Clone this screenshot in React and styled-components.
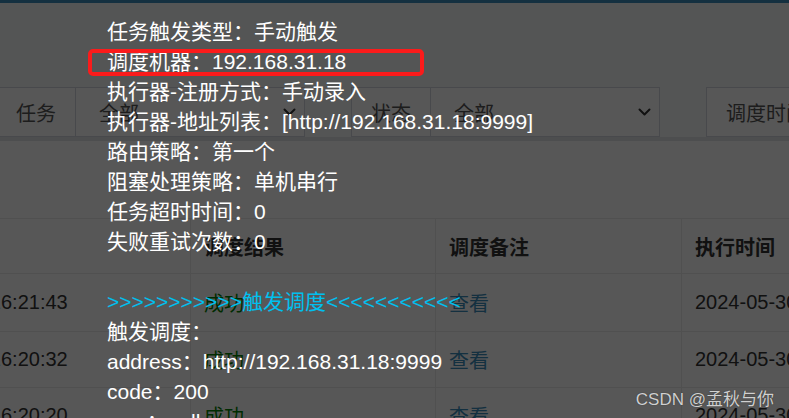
import React from 'react';
import styled, { createGlobalStyle } from 'styled-components';

const GlobalStyle = createGlobalStyle`
  html, body {
    margin: 0;
    padding: 0;
    width: 789px;
    height: 418px;
    overflow: hidden;
    background: #f7f8fa;
    font-family: "Liberation Sans", "Noto Sans CJK SC", sans-serif;
  }
`;

const Page = styled.div`
  position: relative;
  width: 789px;
  height: 418px;
  overflow: hidden;
`;

const TopBar = styled.div`
  height: 3px;
  background: #3c8dbc;
`;

const Content = styled.div`
  padding-top: 84px;
`;

const FilterRow = styled.div`
  display: flex;
  gap: 46px;
  margin-left: -4px;
  height: 50px;
`;

const InputGroup = styled.div`
  flex: 0 0 309px;
  display: flex;
  height: 50px;
`;

const Addon = styled.div`
  flex: 0 0 auto;
  display: flex;
  align-items: center;
  padding: 0 19px;
  background: #fff;
  border: 1px solid #d2d6de;
  color: #555;
  font-size: 20px;
  white-space: nowrap;
`;

const Select = styled.div`
  flex: 1;
  display: flex;
  align-items: center;
  justify-content: space-between;
  padding: 0 8px 0 23px;
  background: #fff;
  border: 1px solid #d2d6de;
  border-left: none;
  color: #555;
  font-size: 20px;
`;

const Divider = styled.div`
  height: 4px;
  background: #e2e4e8;
`;

const TableBox = styled.div`
  background: #fff;
  padding-top: 77px;
  height: 300px;
`;

const LogTable = styled.table`
  margin-left: -132px;
  width: 1113px;
  table-layout: fixed;
  border-collapse: collapse;
  font-size: 20px;
  color: #333;
`;

const Th = styled.th`
  height: 54px;
  padding: 0 13px;
  text-align: left;
  font-weight: bold;
  border: 1px solid #ebebeb;
  white-space: nowrap;
  overflow: hidden;
`;

const Td = styled.td`
  height: ${p => p.$h || 55}px;
  padding: 0 13px;
  border: 1px solid #ebebeb;
  white-space: nowrap;
  overflow: hidden;
  color: ${p => p.$tone === 'ok' ? 'green' : p.$tone === 'link' ? '#3c8dbc' : '#333'};
`;

const Backdrop = styled.div`
  position: absolute;
  inset: 0;
  background: rgba(0, 0, 0, 0.66);
`;

const Tips = styled.div`
  position: absolute;
  left: 107px;
  top: 17px;
  color: #fff;
  font-size: 21px;
`;

const Line = styled.div`
  position: relative;
  height: 30px;
  line-height: 30px;
  white-space: nowrap;
  color: ${p => p.$accent ? '#00c0ef' : '#fff'};

  ${p => p.$marked && `
    &::after {
      content: '';
      position: absolute;
      left: -19px;
      top: 2px;
      width: 336px;
      height: 27px;
      box-sizing: border-box;
      border: 4px solid #fb1b1b;
      border-radius: 5px;
    }
  `}
`;

const Watermark = styled.div`
  position: absolute;
  right: 15px;
  bottom: 8px;
  font-size: 17px;
  color: rgba(255, 255, 255, 0.78);
  text-shadow: 0 0 1px rgba(0, 0, 0, 0.6);
  white-space: nowrap;
`;

const Chevron = () => (
  <svg width="13" height="8" viewBox="0 0 13 8" fill="none">
    <path d="M1.5 1.5l5 5 5-5" stroke="#333" strokeWidth="2" strokeLinecap="round" strokeLinejoin="round" />
  </svg>
);

const rows = [
  { time: '2024-05-30 16:21:43', h: 57 },
  { time: '2024-05-30 16:20:32', h: 55 },
  { time: '2024-05-30 16:20:20', h: 55 },
];

const tipLines = [
  '任务触发类型：手动触发',
  '调度机器：192.168.31.18',
  '执行器-注册方式：手动录入',
  '执行器-地址列表：[http://192.168.31.18:9999]',
  '路由策略：第一个',
  '阻塞处理策略：单机串行',
  '任务超时时间：0',
  '失败重试次数：0',
  '',
  '>>>>>>>>>>>触发调度<<<<<<<<<<<',
  '触发调度：',
  'address：http://192.168.31.18:9999',
  'code：200',
  'msg：null',
];

export default function App() {
  return (
    <Page>
      <GlobalStyle />
      <TopBar />
      <Content>
        <FilterRow>
          <InputGroup>
            <Addon>任务</Addon>
            <Select>全部<Chevron /></Select>
          </InputGroup>
          <InputGroup>
            <Addon>状态</Addon>
            <Select>全部<Chevron /></Select>
          </InputGroup>
          <InputGroup>
            <Addon>调度时间</Addon>
            <Select />
          </InputGroup>
        </FilterRow>
        <Divider />
        <TableBox>
          <LogTable>
            <colgroup>
              <col style={{ width: 322 }} />
              <col style={{ width: 245 }} />
              <col style={{ width: 246 }} />
              <col style={{ width: 300 }} />
            </colgroup>
            <thead>
              <tr>
                <Th>调度时间</Th>
                <Th>调度结果</Th>
                <Th>调度备注</Th>
                <Th>执行时间</Th>
              </tr>
            </thead>
            <tbody>
              {rows.map(r => (
                <tr key={r.time}>
                  <Td $h={r.h}>{r.time}</Td>
                  <Td $h={r.h} $tone="ok">成功</Td>
                  <Td $h={r.h} $tone="link">查看</Td>
                  <Td $h={r.h}>2024-05-30 16:21:43</Td>
                </tr>
              ))}
            </tbody>
          </LogTable>
        </TableBox>
      </Content>
      <Backdrop />
      <Tips>
        {tipLines.map((text, i) => (
          <Line key={i} $marked={i === 1} $accent={text.startsWith('>')}>
            {text}
          </Line>
        ))}
      </Tips>
      <Watermark>CSDN @孟秋与你</Watermark>
    </Page>
  );
}
